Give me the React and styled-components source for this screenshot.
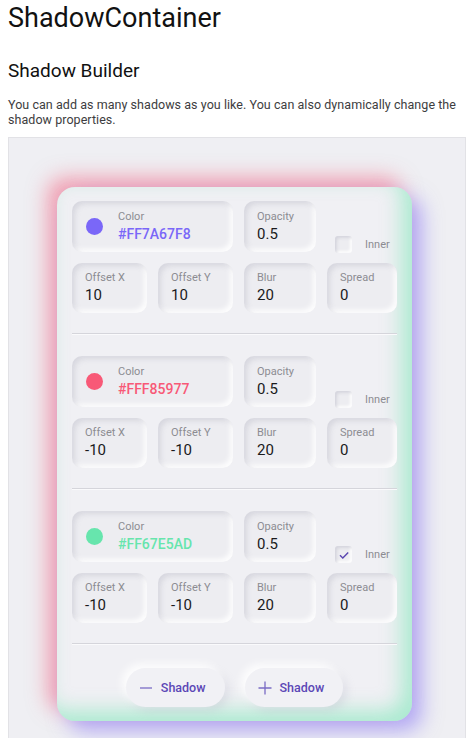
import React from "react";
import styled, { createGlobalStyle } from "styled-components";

const GlobalStyle = createGlobalStyle`
  body {
    margin: 0;
    background: #ffffff;
    font-family: Roboto, "Liberation Sans", sans-serif;
    color: #1c1c1e;
  }
`;

const shadows = [
  { color: "#FF7A67F8", dot: "#7a67f8", opacity: "0.5", inner: false, x: "10", y: "10", blur: "20", spread: "0" },
  { color: "#FFF85977", dot: "#f85977", opacity: "0.5", inner: false, x: "-10", y: "-10", blur: "20", spread: "0" },
  { color: "#FF67E5AD", dot: "#67e5ad", opacity: "0.5", inner: true, x: "-10", y: "-10", blur: "20", spread: "0" },
];

const Page = styled.div`
  padding: 0 8px;
`;

const Title = styled.h1`
  margin: 0;
  font-size: 27px;
  line-height: 36px;
  font-weight: 400;
  color: #111;
`;

const Subtitle = styled.h2`
  margin: 21px 0 0;
  font-size: 19px;
  line-height: 28px;
  font-weight: 400;
  color: #111;
`;

const Intro = styled.p`
  margin: 12px 0 0;
  font-size: 12.5px;
  line-height: 15px;
  letter-spacing: 0.05px;
  color: #3d3d40;
`;

const Demo = styled.div`
  margin-top: 10px;
  padding: 49px 48px 48px;
  background: #efeff3;
  border: 1px solid #e2e2e6;
`;

const Card = styled.div`
  width: 355px;
  box-sizing: border-box;
  padding: 14px 15px;
  border-radius: 18px;
  background: #f0f0f4;
  box-shadow: 10px 10px 20px rgba(122, 103, 248, 0.5),
    -10px -10px 20px rgba(248, 89, 119, 0.5),
    inset -10px -10px 20px rgba(103, 229, 173, 0.5);
`;

const Grid = styled.div`
  display: grid;
  grid-template-columns: 75px 75px 72px 1fr;
  grid-template-rows: 51px 50px;
  column-gap: 11px;
  row-gap: 11px;
`;

const Field = styled.div`
  grid-column: ${(p) => p.$span || "auto"};
  display: flex;
  align-items: center;
  gap: 15px;
  padding: 9px 13px;
  box-sizing: border-box;
  border-radius: 10px;
  background: #ededf1;
  box-shadow: inset 3px 3px 5px rgba(160, 160, 180, 0.28),
    inset -3px -3px 5px rgba(255, 255, 255, 0.9);
  align-self: stretch;
`;

const FieldText = styled.div`
  display: flex;
  flex-direction: column;
`;

const Label = styled.span`
  font-size: 11px;
  line-height: 14px;
  color: #8c8c92;
`;

const Value = styled.span`
  font-size: ${(p) => (p.$hex ? "14px" : "15px")};
  line-height: 20px;
  font-weight: ${(p) => (p.$hex ? 500 : 400)};
  color: ${(p) => p.$color || "#1a1a1c"};
`;

const Dot = styled.span`
  width: 17px;
  height: 17px;
  border-radius: 50%;
  flex: none;
  background: ${(p) => p.$color};
  margin-left: 1px;
`;

const InnerCell = styled.label`
  align-self: end;
  display: flex;
  align-items: center;
  gap: 13px;
  padding-left: 8px;
  margin-bottom: -1px;
  font-size: 11px;
  color: #8c8c92;
`;

const Box = styled.span`
  width: 17px;
  height: 17px;
  border-radius: 3px;
  display: flex;
  align-items: center;
  justify-content: center;
  background: #ededf1;
  box-shadow: inset 2px 2px 3px rgba(160, 160, 180, 0.3),
    inset -2px -2px 3px rgba(255, 255, 255, 0.9);
`;

const Divider = styled.hr`
  margin: 20px 0 21px;
  border: none;
  border-top: 1px solid #d5d5db;
  border-bottom: 1px solid #fafafc;
`;

const Actions = styled.div`
  display: flex;
  justify-content: center;
  gap: 20px;
  margin-top: 23px;
`;

const Button = styled.button`
  display: flex;
  align-items: center;
  gap: 8px;
  height: 39px;
  padding: 0 19px 0 13px;
  border: none;
  border-radius: 20px;
  background: #f1f1f5;
  box-shadow: -4px -4px 8px rgba(255, 255, 255, 0.9),
    4px 4px 8px rgba(170, 170, 190, 0.25);
  font-family: Roboto, "Liberation Sans", sans-serif;
  font-size: 12.5px;
  font-weight: 500;
  color: #5b47b6;
`;

const Check = () => (
  <svg width="12" height="12" viewBox="0 0 12 12">
    <path d="M2 6.3 L4.8 9 L10.2 3.4" fill="none" stroke="#5a46b0" strokeWidth="1.4" />
  </svg>
);

const Minus = () => (
  <svg width="14" height="14" viewBox="0 0 14 14">
    <path d="M1 7 H13" stroke="#7a6cc4" strokeWidth="1.3" />
  </svg>
);

const Plus = () => (
  <svg width="14" height="14" viewBox="0 0 14 14">
    <path d="M0.5 7 H13.5 M7 0.5 V13.5" stroke="#7a6cc4" strokeWidth="1.3" />
  </svg>
);

const ShadowRow = ({ s }) => (
  <Grid>
    <Field $span="span 2">
      <Dot $color={s.dot} />
      <FieldText>
        <Label>Color</Label>
        <Value $hex $color={s.dot}>{s.color}</Value>
      </FieldText>
    </Field>
    <Field>
      <FieldText>
        <Label>Opacity</Label>
        <Value>{s.opacity}</Value>
      </FieldText>
    </Field>
    <InnerCell>
      <Box>{s.inner && <Check />}</Box>
      Inner
    </InnerCell>
    {[
      ["Offset X", s.x],
      ["Offset Y", s.y],
      ["Blur", s.blur],
      ["Spread", s.spread],
    ].map(([label, value]) => (
      <Field key={label}>
        <FieldText>
          <Label>{label}</Label>
          <Value>{value}</Value>
        </FieldText>
      </Field>
    ))}
  </Grid>
);

const App = () => {
  return (
    <Page>
      <GlobalStyle />
      <Title>ShadowContainer</Title>
      <Subtitle>Shadow Builder</Subtitle>
      <Intro>
        You can add as many shadows as you like. You can also dynamically change the shadow
        properties.
      </Intro>
      <Demo>
        <Card>
          {shadows.map((s) => (
            <React.Fragment key={s.color}>
              <ShadowRow s={s} />
              <Divider />
            </React.Fragment>
          ))}
          <Actions>
            <Button>
              <Minus />
              Shadow
            </Button>
            <Button>
              <Plus />
              Shadow
            </Button>
          </Actions>
        </Card>
      </Demo>
    </Page>
  );
};

export default App;
